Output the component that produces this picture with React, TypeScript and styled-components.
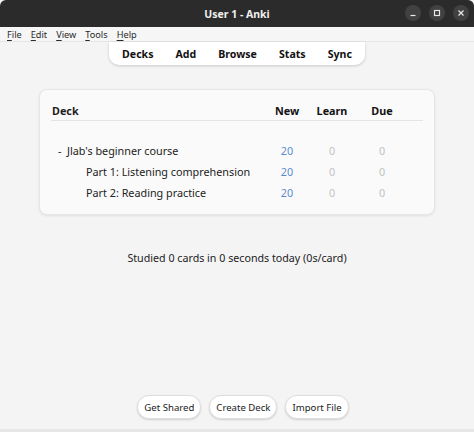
import styled, { createGlobalStyle } from "styled-components";

const GlobalStyle = createGlobalStyle`
    html, body {
        margin: 0;
        padding: 0;
        background: #f4f4f4;
    }

    body {
        font-family: "Noto Sans", "Open Sans", sans-serif;
        color: #1f1f1f;
    }

    #root {
        width: 474px;
        height: 432px;
    }
`;

const Window = styled.div`
    width: 474px;
    height: 432px;
    display: flex;
    flex-direction: column;
    overflow: hidden;
`;

const TitleBar = styled.div`
    height: 27px;
    flex: none;
    position: relative;
    display: flex;
    align-items: center;
    justify-content: center;
    background: #2b2b2b;
    color: #f0f0f0;
    font-size: 10.5px;
    font-weight: 700;
    border-radius: 6px 6px 0 0;
`;

const WindowControls = styled.div`
    position: absolute;
    right: 5px;
    top: 5px;
    display: flex;
    gap: 8px;
`;

const ControlButton = styled.span`
    width: 16px;
    height: 16px;
    border-radius: 50%;
    background: #414141;
    display: flex;
    align-items: center;
    justify-content: center;
`;

const MenuBar = styled.div`
    height: 14px;
    flex: none;
    display: flex;
    align-items: center;
    gap: 9px;
    padding-left: 7px;
    background: #f6f6f6;
    border-bottom: 1px solid #e6e6e6;
    font-size: 9.2px;
    color: #2a2a2a;
`;

const MenuItem = styled.span`
    & u {
        text-decoration-thickness: 1px;
        text-underline-offset: 2px;
    }
`;

const Main = styled.div`
    flex: 1;
    display: flex;
    flex-direction: column;
    align-items: center;
    background: #f4f4f4;
    padding-bottom: 10px;
`;

const Toolbar = styled.nav`
    display: flex;
    padding: 0 2px;
    height: 23px;
    align-items: center;
    background: #ffffff;
    border-radius: 0 0 10px 10px;
    box-shadow: 0 1px 3px rgba(0, 0, 0, 0.18);
`;

const ToolbarLink = styled.span`
    padding: 0 11px;
    font-size: 10.6px;
    font-weight: 700;
    color: #111;
`;

const Card = styled.div`
    width: 396px;
    box-sizing: border-box;
    margin-top: 24px;
    padding: 10px 11px 11px;
    background: #fafafa;
    border: 1px solid #e6e6e6;
    border-radius: 8px;
    box-shadow: 0 1px 3px rgba(0, 0, 0, 0.08);
`;

const Row = styled.div<{ $header?: boolean }>`
    display: grid;
    grid-template-columns: minmax(0, 1fr) 44px 46px 54px;
    padding-right: 14px;
    align-items: center;
    height: ${p => (p.$header ? "20px" : "21px")};
    font-size: 10.8px;
    font-weight: ${p => (p.$header ? 700 : 400)};
    border-bottom: ${p => (p.$header ? "1px solid #e4e4e4" : "none")};
    margin-bottom: ${p => (p.$header ? "19px" : "0")};
`;

const DeckName = styled.span<{ $depth: number }>`
    padding-left: ${p => (p.$depth === 0 ? 7 : 35)}px;
    white-space: nowrap;
    color: #222;
`;

const HeaderLabel = styled.span`
    padding-left: 1px;
`;

const Collapse = styled.span`
    display: inline-block;
    width: 9px;
`;

const Count = styled.span<{ $tone: "new" | "muted" | "head" }>`
    text-align: center;
    color: ${p => (p.$tone === "new" ? "#5a8bd0" : p.$tone === "muted" ? "#c2c2c2" : "#111")};
`;

const Studied = styled.p`
    margin: 36px 0 0;
    font-size: 10.7px;
    color: #222;
`;

const Spacer = styled.div`
    flex: 1;
`;

const Actions = styled.div`
    display: flex;
    gap: 8px;
    padding-left: 12px;
`;

const ActionButton = styled.button`
    height: 24px;
    padding: 0 6px;
    border: 1px solid #dedede;
    border-radius: 12px;
    background: #ffffff;
    box-shadow: 0 1px 2px rgba(0, 0, 0, 0.15);
    font-family: inherit;
    font-size: 9.6px;
    color: #222;
`;

const BottomEdge = styled.div`
    height: 3px;
    flex: none;
    background: #e7e7e7;
`;

const decks = [
    { name: "Jlab's beginner course", depth: 0 },
    { name: "Part 1: Listening comprehension", depth: 1 },
    { name: "Part 2: Reading practice", depth: 1 },
];

const menu = [
    ["F", "ile"],
    ["E", "dit"],
    ["V", "iew"],
    ["T", "ools"],
    ["H", "elp"],
];

const App = () => {
    return (
        <Window>
            <GlobalStyle />
            <TitleBar>
                User 1 - Anki
                <WindowControls>
                    <ControlButton>
                        <svg width="8" height="8" viewBox="0 0 8 8">
                            <path d="M1.5 6.5h5" stroke="#e8e8e8" strokeWidth="1.2" />
                        </svg>
                    </ControlButton>
                    <ControlButton>
                        <svg width="8" height="8" viewBox="0 0 8 8">
                            <rect x="1.5" y="1.5" width="5" height="5" fill="none" stroke="#e8e8e8" strokeWidth="1.2" />
                        </svg>
                    </ControlButton>
                    <ControlButton>
                        <svg width="8" height="8" viewBox="0 0 8 8">
                            <path d="M1.5 1.5l5 5M6.5 1.5l-5 5" stroke="#e8e8e8" strokeWidth="1.2" />
                        </svg>
                    </ControlButton>
                </WindowControls>
            </TitleBar>
            <MenuBar>
                {menu.map(([key, rest]) => (
                    <MenuItem key={key}>
                        <u>{key}</u>
                        {rest}
                    </MenuItem>
                ))}
            </MenuBar>
            <Main>
                <Toolbar>
                    <ToolbarLink>Decks</ToolbarLink>
                    <ToolbarLink>Add</ToolbarLink>
                    <ToolbarLink>Browse</ToolbarLink>
                    <ToolbarLink>Stats</ToolbarLink>
                    <ToolbarLink>Sync</ToolbarLink>
                </Toolbar>
                <Card>
                    <Row $header>
                        <HeaderLabel>Deck</HeaderLabel>
                        <Count $tone="head">New</Count>
                        <Count $tone="head">Learn</Count>
                        <Count $tone="head">Due</Count>
                    </Row>
                    {decks.map(deck => (
                        <Row key={deck.name}>
                            <DeckName $depth={deck.depth}>
                                {deck.depth === 0 && <Collapse>-</Collapse>}
                                {deck.name}
                            </DeckName>
                            <Count $tone="new">20</Count>
                            <Count $tone="muted">0</Count>
                            <Count $tone="muted">0</Count>
                        </Row>
                    ))}
                </Card>
                <Studied>Studied 0 cards in 0 seconds today (0s/card)</Studied>
                <Spacer />
                <Actions>
                    <ActionButton>Get Shared</ActionButton>
                    <ActionButton>Create Deck</ActionButton>
                    <ActionButton>Import File</ActionButton>
                </Actions>
            </Main>
            <BottomEdge />
        </Window>
    );
};

export default App;
